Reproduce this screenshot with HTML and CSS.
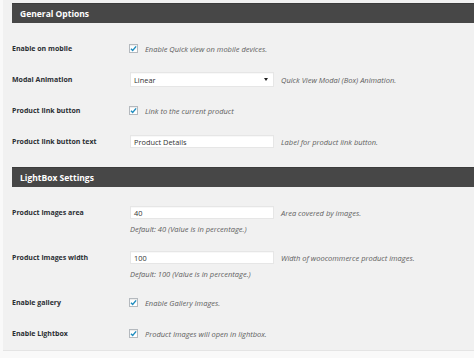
FILE: index.html
```html
<!DOCTYPE html>
<html>
<head>
<meta charset="utf-8">
<link rel="stylesheet" href="styles.css">
</head>
<body>
<div class="page">
  <h2 class="section-title">General Options</h2>
  <div class="section first">
    <div class="row">
      <div class="label">Enable on mobile</div>
      <div class="field">
        <span class="checkbox"><svg viewBox="0 0 10 10" width="9" height="9"><path d="M2.2 5.2 L4.1 7.2 L7.9 2.6" fill="none" stroke="#1e8cbe" stroke-width="1.6"/></svg></span>
        <span class="desc">Enable Quick view on mobile devices.</span>
      </div>
    </div>
    <div class="row">
      <div class="label">Modal Animation</div>
      <div class="field">
        <span class="select"><span>Linear</span><span class="arrow"></span></span>
        <span class="desc after">Quick View Modal (Box) Animation.</span>
      </div>
    </div>
    <div class="row">
      <div class="label">Product link button</div>
      <div class="field">
        <span class="checkbox"><svg viewBox="0 0 10 10" width="9" height="9"><path d="M2.2 5.2 L4.1 7.2 L7.9 2.6" fill="none" stroke="#1e8cbe" stroke-width="1.6"/></svg></span>
        <span class="desc">Link to the current product</span>
      </div>
    </div>
    <div class="row">
      <div class="label">Product link button text</div>
      <div class="field">
        <span class="input">Product Details</span>
        <span class="desc after">Label for product link button.</span>
      </div>
    </div>
  </div>

  <h2 class="section-title">LightBox Settings</h2>
  <div class="section second">
    <div class="trow">
      <div class="label">Product images area</div>
      <div class="fcol">
        <div class="field">
          <span class="input">40</span>
          <span class="desc after">Area covered by images.</span>
        </div>
        <div class="desc note">Default: 40 (Value is in percentage.)</div>
      </div>
    </div>
    <div class="trow second-row">
      <div class="label">Product images width</div>
      <div class="fcol">
        <div class="field">
          <span class="input">100</span>
          <span class="desc after">Width of woocommerce product images.</span>
        </div>
        <div class="desc note">Default: 100 (Value is in percentage.)</div>
      </div>
    </div>
    <div class="row gallery">
      <div class="label">Enable gallery</div>
      <div class="field">
        <span class="checkbox"><svg viewBox="0 0 10 10" width="9" height="9"><path d="M2.2 5.2 L4.1 7.2 L7.9 2.6" fill="none" stroke="#1e8cbe" stroke-width="1.6"/></svg></span>
        <span class="desc">Enable Gallery Images.</span>
      </div>
    </div>
    <div class="row">
      <div class="label">Enable Lightbox</div>
      <div class="field">
        <span class="checkbox"><svg viewBox="0 0 10 10" width="9" height="9"><path d="M2.2 5.2 L4.1 7.2 L7.9 2.6" fill="none" stroke="#1e8cbe" stroke-width="1.6"/></svg></span>
        <span class="desc">Product Images will open in lightbox.</span>
      </div>
    </div>
  </div>
</div>
</body>
</html>
```

FILE: styles.css
```css
html, body {
  margin: 0;
  padding: 0;
  background: #f9f9f9;
}
body {
  width: 474px;
  height: 358px;
  overflow: hidden;
  font-family: "Open Sans", "Noto Sans", sans-serif;
  color: #23282d;
}
.page {
  margin-left: 3px;
  padding: 3px 0 0 9px;
  background: #f1f1f1;
  height: 347px;
  border-bottom: 1px solid #e4e4e4;
}
.section-title {
  margin: 0;
  height: 20px;
  line-height: 20px;
  background: #474747;
  color: #fff;
  font-size: 8.5px;
  font-weight: 700;
  padding-left: 8px;
  border-top: 1px solid #3c3c3c;
  box-sizing: border-box;
}
.section.first {
  padding-top: 10px;
  margin-bottom: 10px;
}
.section.second {
  padding-top: 19px;
}
.row {
  display: flex;
  align-items: center;
  height: 31px;
}
.trow {
  display: flex;
  align-items: flex-start;
}
.trow .label {
  line-height: 13px;
}
.second-row {
  margin-top: 16px;
}
.gallery {
  margin-top: 7px;
}
.label {
  width: 118px;
  flex: none;
  font-size: 7px;
  font-weight: 700;
  color: #2a2e33;
}
.field {
  display: flex;
  align-items: center;
}
.fcol {
  display: flex;
  flex-direction: column;
}
.checkbox {
  width: 9px;
  height: 9px;
  box-sizing: border-box;
  border: 1px solid #b4b9be;
  background: #fff;
  box-shadow: inset 0 1px 1px rgba(0,0,0,.08);
  display: flex;
  align-items: center;
  justify-content: center;
  margin-left: -1px;
  margin-right: 7px;
}
.checkbox svg {
  flex: none;
}
.desc {
  font-size: 7.5px;
  font-style: italic;
  color: #5f5f5f;
}
.desc.after {
  margin-left: 7px;
}
.note {
  margin-top: 4px;
  line-height: 12px;
}
.select, .input {
  width: 144px;
  height: 13px;
  box-sizing: border-box;
  background: #fff;
  border: 1px solid #e6e6e6;
  box-shadow: inset 0 1px 1px rgba(0,0,0,.03);
  font-size: 7.4px;
  color: #333;
  padding-left: 3px;
  display: flex;
  align-items: center;
  justify-content: space-between;
}
.select {
  height: 15px;
}
.arrow {
  width: 0;
  height: 0;
  border-left: 2px solid transparent;
  border-right: 2px solid transparent;
  border-top: 3px solid #222;
  margin-right: 5px;
}
```
